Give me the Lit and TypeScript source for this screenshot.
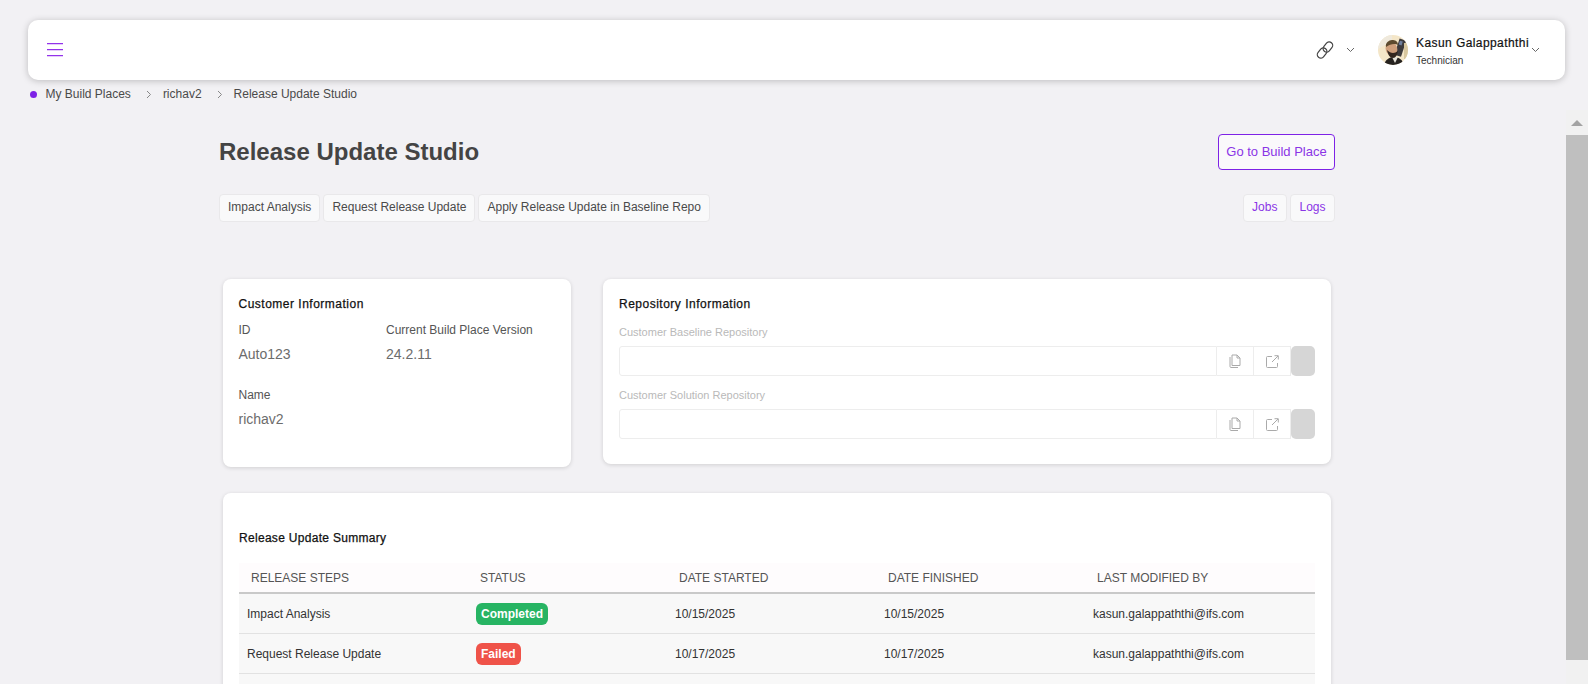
import { LitElement, html, css, svg } from 'lit';
import { customElement } from 'lit/decorators.js';

const chevronDown = svg`<path d="M1 1l3.5 3.5L8 1" fill="none" stroke="#666" stroke-width="1"/>`;
const chevronRight = svg`<path d="M1 1l3.5 3.5L1 8" fill="none" stroke="#888" stroke-width="1"/>`;

const copyIcon = html`<svg width="12" height="14" viewBox="0 0 12 14"><path d="M3 1h5l3 3v7.5H3z" fill="none" stroke="#aaa"/><path d="M8 1v3h3" fill="none" stroke="#aaa"/><path d="M1 3v9.5c0 .6.4 1 1 1h7" fill="none" stroke="#aaa"/></svg>`;
const openIcon = html`<svg width="13" height="13" viewBox="0 0 13 13"><path d="M6 1.5H1.5a1 1 0 0 0-1 1v9a1 1 0 0 0 1 1h9a1 1 0 0 0 1-1V8" fill="none" stroke="#aaa"/><path d="M6 7l6-6M8.5 .7h3.8v3.8" fill="none" stroke="#aaa"/></svg>`;

interface Step {
  name: string;
  status: string;
  started: string;
  finished: string;
  by: string;
}

@customElement('app-root')
export class AppRoot extends LitElement {
  static styles = css`
    :host {
      display: flex;
      flex-direction: column;
      height: 684px;
      overflow: hidden;
      background: #f2f1f4;
      font-family: "Liberation Sans", Arial, sans-serif;
      font-size: 12px;
      color: #444;
    }
    .topbar {
      flex: none;
      display: flex;
      align-items: center;
      height: 60px;
      margin: 20px 23px 0 28px;
      padding: 0 25px 0 19px;
      box-sizing: border-box;
      background: #fff;
      border-radius: 10px;
      box-shadow: 0 1px 7px rgba(0, 0, 0, 0.22);
    }
    .menu {
      display: block;
    }
    .spacer {
      flex: 1;
    }
    .link-chev {
      margin: 0 23px 0 12px;
    }
    .avatar {
      display: block;
      margin-right: 8px;
    }
    .user {
      display: flex;
      flex-direction: column;
      gap: 5px;
      margin-top: 2px;
    }
    .user-name {
      font-size: 12px;
      line-height: 14px;
      color: #111;
      letter-spacing: 0.42px;
      -webkit-text-stroke: 0.2px #111;
    }
    .user-role {
      font-size: 10px;
      line-height: 11px;
      color: #333;
    }
    .user-chev {
      margin-left: 2px;
    }
    .crumbs {
      flex: none;
      display: flex;
      align-items: center;
      height: 18px;
      margin: 5px 0 7px 30px;
      line-height: 18px;
      color: #4a4a4a;
    }
    .crumbs .first {
      margin-left: 0.5px;
    }
    .dot {
      width: 7px;
      height: 7px;
      margin-right: 8px;
      border-radius: 50%;
      background: #7e22e6;
    }
    .crumb-sep {
      margin: 0 11px 0 15px;
    }
    .pane {
      flex: 1;
      min-height: 0;
      display: flex;
    }
    .content {
      flex: 1;
      min-width: 0;
      padding: 24px 231px 0 219px;
    }
    .scrollbar {
      flex: none;
      width: 22px;
      display: flex;
      flex-direction: column;
      align-items: center;
      background: #f1f1f1;
    }
    .scroll-up {
      width: 0;
      height: 0;
      margin: 10px 0 9px;
      border: 6px solid transparent;
      border-top: 0;
      border-bottom-color: #a3a3a3;
    }
    .scroll-thumb {
      align-self: stretch;
      height: 525px;
      background: #bfbfbf;
    }
    .title-row {
      display: flex;
      align-items: center;
      justify-content: space-between;
      height: 36px;
    }
    h1 {
      margin: 0;
      font-size: 24px;
      font-weight: 700;
      color: #444;
    }
    .primary {
      width: 117px;
      height: 36px;
      box-sizing: border-box;
      border: 1px solid #7e22e6;
      border-radius: 4px;
      background: #faf9fb;
      color: #8a35e6;
      font: inherit;
      font-size: 13px;
      padding: 0 0 2px;
    }
    .tab-row {
      display: flex;
      justify-content: space-between;
      margin-top: 24px;
    }
    .tabs {
      display: flex;
      gap: 3px;
    }
    .tab {
      height: 28px;
      padding: 0 8px 2px;
      box-sizing: border-box;
      border: 1px solid #e9e8ea;
      border-radius: 4px;
      background: #f9f9fa;
      color: #4a4a4a;
      font: inherit;
    }
    .tab.accent {
      padding: 0 8.5px 2px;
      color: #8a35e6;
    }
    .cards {
      display: flex;
      align-items: flex-start;
      gap: 32px;
      margin: 57px 4px 0;
    }
    .card {
      background: #fff;
      border-radius: 8px;
      box-shadow: 0 1px 4px rgba(0, 0, 0, 0.14);
      box-sizing: border-box;
    }
    .customer {
      flex: none;
      width: 348px;
      padding: 18px 16px 39px 15.5px;
    }
    .repo {
      flex: 1;
      padding: 18px 16px 25px;
    }
    h2 {
      margin: 0;
      font-size: 12px;
      line-height: 14px;
      font-weight: 400;
      color: #111;
      letter-spacing: 0.5px;
      -webkit-text-stroke: 0.25px #111;
    }
    .summary h2 {
      letter-spacing: 0.3px;
    }
    .info {
      display: grid;
      grid-template-columns: 147.5px 1fr;
      row-gap: 25px;
      margin-top: 12px;
    }
    .label {
      line-height: 14px;
      color: #555;
    }
    .value {
      margin-top: 8px;
      font-size: 14px;
      line-height: 18px;
      color: #6c6c6c;
    }
    .repo-label {
      margin-top: 15px;
      font-size: 11px;
      line-height: 12px;
      color: #b9b9b9;
    }
    .repo-label + .field {
      margin-top: 8px;
    }
    .field + .repo-label {
      margin-top: 13px;
    }
    .field {
      display: flex;
      height: 30px;
    }
    .field-input {
      flex: 1;
      border: 1px solid #ededed;
      border-radius: 3px 0 0 3px;
    }
    .field-btn {
      flex: none;
      width: 37px;
      display: flex;
      align-items: center;
      justify-content: center;
      box-sizing: border-box;
      border: 1px solid #ededed;
      border-left: 0;
    }
    .field-toggle {
      flex: none;
      width: 24px;
      border-radius: 5px;
      background: #d6d6d6;
    }
    .summary {
      margin: 26px 4px 0;
      padding: 38px 16px 20px;
    }
    .grid {
      display: grid;
      grid-template-columns: 229px 199px 209px 209px 1fr;
    }
    .thead {
      margin-top: 18px;
      height: 31px;
      box-sizing: border-box;
      align-items: center;
      background: #fefcfd;
      border-bottom: 2px solid #c9c9c9;
      color: #555;
    }
    .thead span {
      padding-left: 12px;
    }
    .row {
      height: 39px;
      box-sizing: content-box;
      align-items: center;
      background: #f8f8f8;
      border-bottom: 1px solid #e2e2e2;
      color: #333;
    }
    .row > span {
      padding-left: 8px;
    }
    .badge {
      display: inline-block;
      height: 22px;
      padding: 0 5px;
      border-radius: 6px;
      line-height: 22px;
      font-weight: 700;
      font-size: 12px;
      color: #fff;
    }
    .badge.completed {
      background: #27b463;
    }
    .badge.failed {
      background: #ef5349;
    }
  `;

  steps: Step[] = [
    { name: 'Impact Analysis', status: 'Completed', started: '10/15/2025', finished: '10/15/2025', by: 'kasun.galappaththi@ifs.com' },
    { name: 'Request Release Update', status: 'Failed', started: '10/17/2025', finished: '10/17/2025', by: 'kasun.galappaththi@ifs.com' },
    { name: '', status: '', started: '', finished: '', by: '' },
  ];

  field() {
    return html`<div class="field">
      <div class="field-input"></div>
      <div class="field-btn">${copyIcon}</div>
      <div class="field-btn">${openIcon}</div>
      <div class="field-toggle"></div>
    </div>`;
  }

  render() {
    return html`
      <header class="topbar">
        <svg class="menu" width="16" height="14" viewBox="0 0 16 14">
          <path d="M0 .6h16M0 6.6h16M0 12.6h16" stroke="#9333ea" stroke-width="1.3"/>
        </svg>
        <div class="spacer"></div>
        <svg width="18" height="18" viewBox="0 0 18 18" fill="none" stroke="#444" stroke-width="1.25">
          <rect x="0.6" y="8.5" width="11" height="7" rx="3.5" transform="rotate(-50 6.1 12)"/>
          <rect x="6.4" y="2.5" width="11" height="7" rx="3.5" transform="rotate(-50 11.9 6)"/>
        </svg>
        <svg class="link-chev" width="9" height="6" viewBox="0 0 9 6">${chevronDown}</svg>
        <svg class="avatar" width="30" height="30" viewBox="0 0 30 30">
          <defs><clipPath id="av"><circle cx="15" cy="15" r="15"/></clipPath></defs>
          <g clip-path="url(#av)">
            <rect width="30" height="30" fill="#f4e6c8"/>
            <path d="M0 0h14v6L0 14z" fill="#efe9dc"/>
            <rect x="19" y="4" width="7" height="17" fill="#3d3a3c" transform="rotate(18 22 12)"/>
            <rect x="20" y="6" width="3" height="4" fill="#6f7f9e" transform="rotate(18 22 12)"/>
            <rect x="26" y="8" width="4" height="16" fill="#d8c79f"/>
            <path d="M6 30c1-5 5-8 10-8s9 3 10 8z" fill="#26221f"/>
            <path d="M14 22l3 6 3-6z" fill="#e8e4da"/>
            <ellipse cx="13.5" cy="14" rx="5.8" ry="7" fill="#cf9f7c" transform="rotate(-15 13.5 14)"/>
            <path d="M9 15c1 5 3 8 6 8s4-3 5-7c-2 1-3 2-5 2s-4-1-6-3z" fill="#33261e"/>
            <path d="M8 12c-1-4 3-7 6-7s6 1 6 5c-3-2-8-1-12 2z" fill="#5d4a2e"/>
          </g>
        </svg>
        <div class="user">
          <span class="user-name">Kasun Galappaththi</span>
          <span class="user-role">Technician</span>
        </div>
        <svg class="user-chev" width="9" height="6" viewBox="0 0 9 6">${chevronDown}</svg>
      </header>

      <nav class="crumbs">
        <span class="dot"></span>
        <span class="first">My Build Places</span>
        <svg class="crumb-sep" width="6" height="9" viewBox="0 0 6 9">${chevronRight}</svg>
        <span>richav2</span>
        <svg class="crumb-sep" width="6" height="9" viewBox="0 0 6 9">${chevronRight}</svg>
        <span>Release Update Studio</span>
      </nav>

      <div class="pane">
        <main class="content">
          <div class="title-row">
            <h1>Release Update Studio</h1>
            <button class="primary">Go to Build Place</button>
          </div>
          <div class="tab-row">
            <div class="tabs">
              <button class="tab">Impact Analysis</button>
              <button class="tab">Request Release Update</button>
              <button class="tab">Apply Release Update in Baseline Repo</button>
            </div>
            <div class="tabs">
              <button class="tab accent">Jobs</button>
              <button class="tab accent">Logs</button>
            </div>
          </div>

          <div class="cards">
            <section class="card customer">
              <h2>Customer Information</h2>
              <div class="info">
                <div>
                  <div class="label">ID</div>
                  <div class="value">Auto123</div>
                </div>
                <div>
                  <div class="label">Current Build Place Version</div>
                  <div class="value">24.2.11</div>
                </div>
                <div>
                  <div class="label">Name</div>
                  <div class="value">richav2</div>
                </div>
              </div>
            </section>
            <section class="card repo">
              <h2>Repository Information</h2>
              <div class="repo-label">Customer Baseline Repository</div>
              ${this.field()}
              <div class="repo-label">Customer Solution Repository</div>
              ${this.field()}
            </section>
          </div>

          <section class="card summary">
            <h2>Release Update Summary</h2>
            <div class="grid thead">
              <span>RELEASE STEPS</span>
              <span>STATUS</span>
              <span>DATE STARTED</span>
              <span>DATE FINISHED</span>
              <span>LAST MODIFIED BY</span>
            </div>
            ${this.steps.map(
              (s) => html`<div class="grid row">
                <span>${s.name}</span>
                <span>${s.status
                  ? html`<span class="badge ${s.status.toLowerCase()}">${s.status}</span>`
                  : ''}</span>
                <span>${s.started}</span>
                <span>${s.finished}</span>
                <span>${s.by}</span>
              </div>`
            )}
          </section>
        </main>
        <div class="scrollbar">
          <div class="scroll-up"></div>
          <div class="scroll-thumb"></div>
        </div>
      </div>
    `;
  }
}
